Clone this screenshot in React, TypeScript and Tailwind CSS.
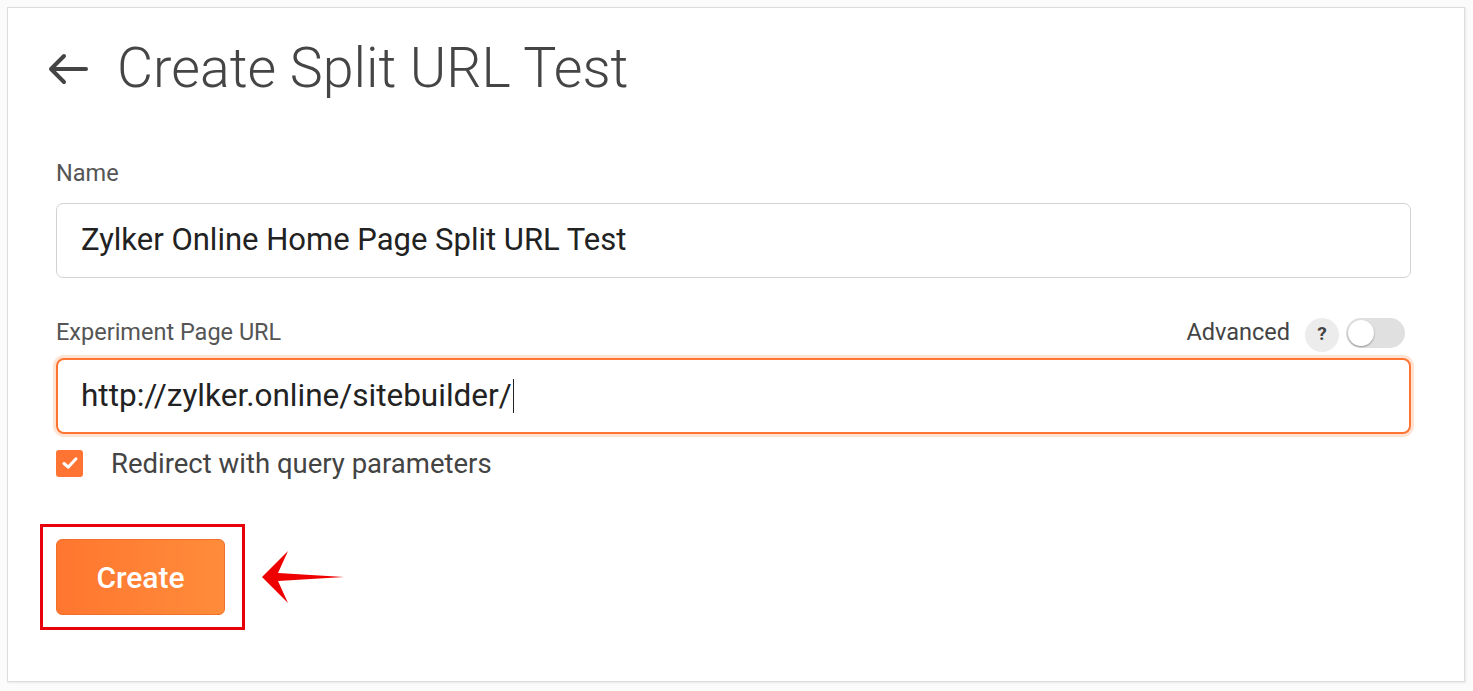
import React from "react";

export default function App() {
  return (
    <div className="w-full h-[691px] bg-[#fbfbfb] pt-[7px] pl-[7px] pr-[8px] pb-[9px]" style={{ fontFamily: "Roboto, 'Liberation Sans', sans-serif" }}>
      <div className="h-full bg-white border border-[#dddddd] shadow-[1px_1px_2px_rgba(0,0,0,0.08)] pl-[40px] pr-[53px]">
        {/* header */}
        <div className="flex items-center h-[124px] pb-[2px]">
          <svg width="40" height="32" viewBox="0 0 40 32" className="mr-[29px]">
            <path d="M38 16 H4 M16 3 L3 16 L16 29" fill="none" stroke="#444" strokeWidth="4" strokeLinecap="round" strokeLinejoin="round" />
          </svg>
          <h1 className="text-[55.5px] font-light text-[#454545] leading-none">Create Split URL Test</h1>
        </div>
        <div className="pl-[8px]">
          {/* Name */}
          <div className="text-[23.5px] text-[#555] leading-none pt-[30px]">Name</div>
          <div className="mt-[17px] h-[75px] border-[1.5px] border-[#d2d2d2] rounded-[7px] flex items-center pl-[24px] text-[31px] text-[#222]">
            Zylker Online Home Page Split URL Test
          </div>
          {/* URL label row */}
          <div className="flex items-center justify-between mt-[40px] h-[30px]">
            <div className="text-[23.5px] text-[#555] leading-none">Experiment Page URL</div>
            <div className="flex items-center">
              <span className="text-[23.5px] text-[#444] leading-none">Advanced</span>
              <span className="ml-[15px] w-[34px] h-[34px] rounded-full bg-[#ececec] flex items-center justify-center text-[19px] font-bold text-[#444] mt-[4px]">?</span>
              <span className="ml-[7px] w-[59px] h-[30px] rounded-full bg-[#e0e0e0] flex items-center pl-[2px] mr-[6px]">
                <span className="w-[26px] h-[26px] rounded-full bg-white shadow-[0_1px_2px_rgba(0,0,0,0.35)]"></span>
              </span>
            </div>
          </div>
          {/* URL input */}
          <div className="mt-[10px] h-[76px] rounded-[8px] border-2 border-[#ff7433] shadow-[0_0_0_3px_#ffe3d3] flex items-center pl-[23px] text-[31.5px] text-[#222]">
            http://zylker.online/sitebuilder/<span className="inline-block w-[1.5px] h-[34px] bg-[#222] ml-[1px]"></span>
          </div>
          {/* checkbox */}
          <div className="flex items-center mt-[16px]">
            <span className="w-[27px] h-[27px] rounded-[3px] bg-[#ff7433] flex items-center justify-center">
              <svg width="18" height="18" viewBox="0 0 18 18">
                <path d="M3 9.5 L7.2 13.2 L15 4.8" fill="none" stroke="white" strokeWidth="3" strokeLinecap="round" strokeLinejoin="round" />
              </svg>
            </span>
            <span className="ml-[28px] text-[27.5px] text-[#444] leading-none">Redirect with query parameters</span>
          </div>
          {/* create */}
          <div className="flex items-center mt-[47px] -ml-[16px]">
            <div className="border-[3px] border-[#e8000b] w-[205px] h-[106px] flex items-center pl-[13px]">
              <button className="w-[169px] h-[76px] rounded-[6px] bg-gradient-to-r from-[#ff7630] to-[#ff8c3a] border border-[#f0702a] text-white text-[30px] font-medium">
                Create
              </button>
            </div>
            <svg width="84" height="52" viewBox="0 0 84 52" className="ml-[17px]">
              <path d="M0 26 L26 0 L16 22 L82 26 L16 30 L26 52 Z" fill="#ee0000" />
            </svg>
          </div>
        </div>
      </div>
    </div>
  );
}
